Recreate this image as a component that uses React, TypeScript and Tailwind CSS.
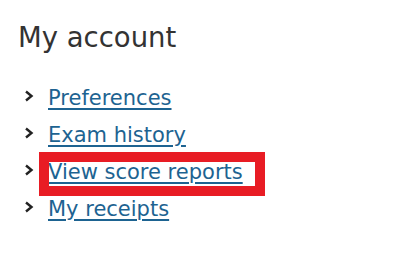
import React from 'react';

const links = ['Preferences', 'Exam history', 'View score reports', 'My receipts'];

const Chevron = () => (
  <svg width="10" height="12" viewBox="0 0 10 12" className="shrink-0 text-[#222]">
    <path d="M2 1.5 L7.5 6 L2 10.5" fill="none" stroke="currentColor" strokeWidth="2.4" strokeLinejoin="miter" />
  </svg>
);

export default function App() {
  return (
    <div className="w-[401px] h-[265px] bg-white pl-[18px] pt-[20px] font-['DejaVu_Sans',sans-serif]">
      <h1 className="text-[27.5px] leading-[34px] text-[#333]">My account</h1>
      <ul className="mt-[32px] flex flex-col gap-[11px]">
        {links.map((label) => (
          <li key={label} className="flex items-start gap-[14px] pl-[6px]">
            <span className="pt-[4px]">
              <Chevron />
            </span>
            <span className="relative">
              <a href="#" className="text-[21px] leading-[24px] text-[#1d6391] underline decoration-2 underline-offset-[3px]">
                {label}
              </a>
              {label === 'View score reports' && (
                <span className="absolute left-[-9px] right-[-22px] top-[-8px] bottom-[-10px] border-[10px] border-[#e81c24]" />
              )}
            </span>
          </li>
        ))}
      </ul>
    </div>
  );
}
